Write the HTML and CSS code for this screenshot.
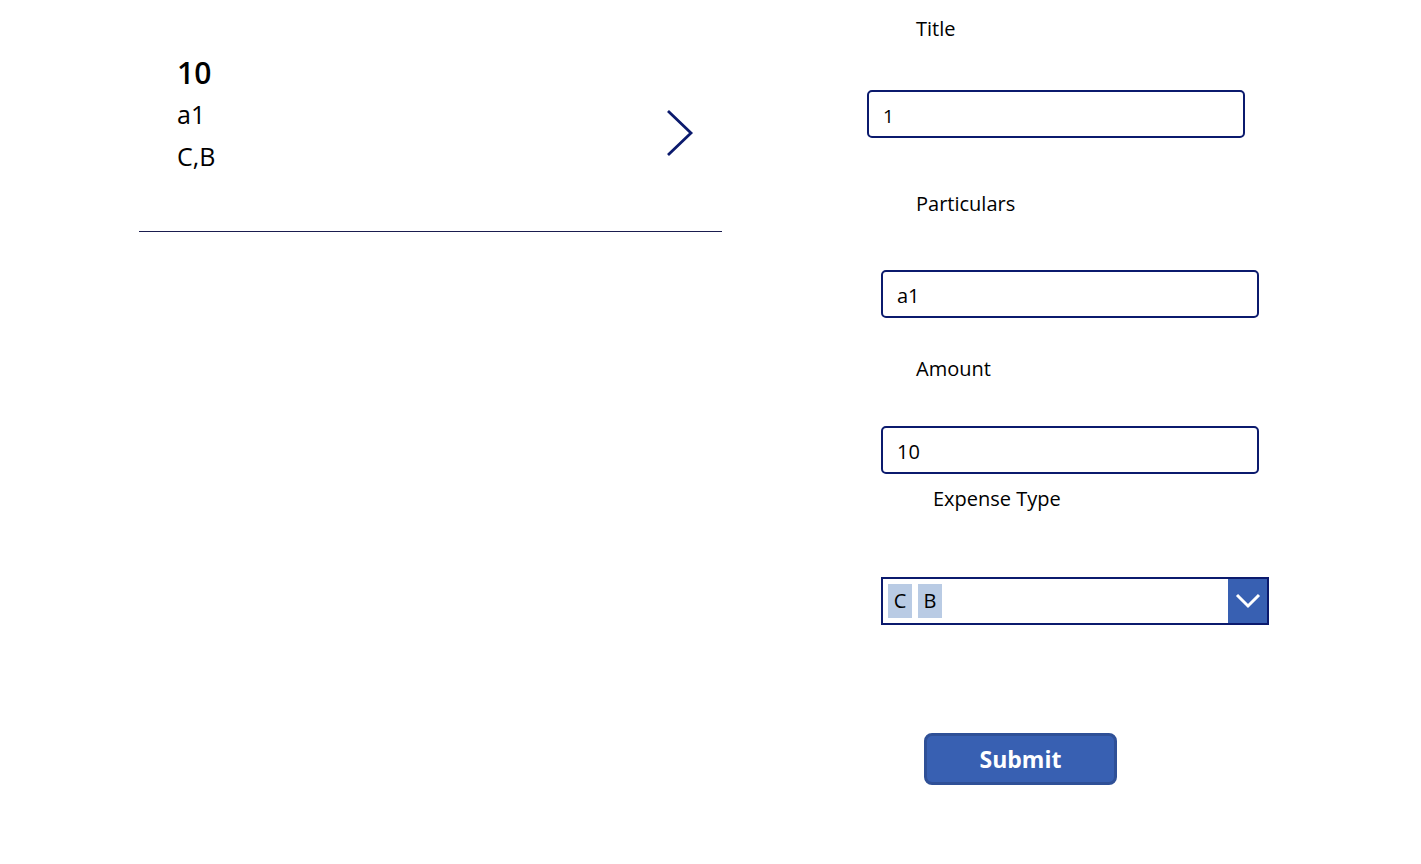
FILE: index.html
```html
<!DOCTYPE html>
<html lang="en">
<head>
<meta charset="utf-8">
<title>Expense</title>
<link rel="stylesheet" href="styles.css">
</head>
<body>
<div class="screen">
  <section class="gallery">
    <div class="item">
      <div class="item-text">
        <div class="item-title">10</div>
        <div class="item-sub">a1</div>
        <div class="item-sub">C,B</div>
      </div>
      <svg class="chevron" width="30" height="48" viewBox="0 0 30 48"><path d="M3 2 L26 24 L3 46" fill="none" stroke="#0b1a6d" stroke-width="2.8"/></svg>
    </div>
    <div class="sep"></div>
  </section>

  <section class="form">
    <div class="label label-title">Title</div>
    <div class="input input-title">1</div>
    <div class="label label-part">Particulars</div>
    <div class="input input-part">a1</div>
    <div class="label label-amount">Amount</div>
    <div class="input input-amount">10</div>
    <div class="label label-type">Expense Type</div>
    <div class="combo">
      <div class="chips">
        <span class="chip">C</span>
        <span class="chip">B</span>
      </div>
      <div class="combo-btn">
        <svg width="26" height="16" viewBox="0 0 26 16"><path d="M2 2 L13 13 L24 2" fill="none" stroke="#ffffff" stroke-width="3"/></svg>
      </div>
    </div>
    <button class="submit">Submit</button>
  </section>
</div>
</body>
</html>
```

FILE: styles.css
```css
html, body {
  margin: 0;
  padding: 0;
  background: #ffffff;
}

body {
  font-family: "Open Sans", "Noto Sans", sans-serif;
  color: #000000;
}

.screen {
  display: flex;
  width: 1421px;
  height: 864px;
}

.gallery {
  margin-left: 139px;
  width: 583px;
}

.item {
  display: flex;
  align-items: flex-start;
  justify-content: space-between;
  height: 231px;
  padding-left: 38px;
  padding-right: 27px;
  box-sizing: border-box;
}

.item-text {
  padding-top: 53px;
}

.item-title {
  font-size: 30px;
  font-weight: 600;
  line-height: 40px;
  height: 40px;
}

.item-sub {
  font-size: 25px;
  line-height: 42px;
  height: 42px;
}

.chevron {
  margin-top: 109px;
}

.sep {
  height: 1px;
  background: #1a1d4f;
}

.form {
  margin-left: 145px;
  display: flex;
  flex-direction: column;
  align-items: flex-start;
}

.label {
  font-size: 20px;
  line-height: 40px;
  height: 40px;
  color: #000000;
}

.label-title { margin-top: 9px; margin-left: 49px; }
.label-part { margin-top: 46px; margin-left: 49px; }
.label-amount { margin-top: 31px; margin-left: 49px; }
.label-type { margin-top: 5px; margin-left: 66px; }

.input {
  width: 378px;
  height: 48px;
  box-sizing: border-box;
  border: 2px solid #0b1a6d;
  border-radius: 5px;
  padding-left: 14px;
  padding-top: 3px;
  font-size: 20px;
  line-height: 42px;
  color: #000000;
}

.input-title { margin-top: 41px; font-size: 19px; }
.input-part { margin-top: 46px; margin-left: 14px; }
.input-amount { margin-top: 37px; margin-left: 14px; }

.combo {
  margin-top: 58px;
  margin-left: 14px;
  width: 388px;
  height: 48px;
  box-sizing: border-box;
  border: 2px solid #0b1a6d;
  display: flex;
  align-items: stretch;
}

.chips {
  flex: 1;
  display: flex;
  align-items: center;
  gap: 6px;
  padding-left: 5px;
}

.chip {
  background: #b9cbe4;
  height: 34px;
  min-width: 24px;
  box-sizing: border-box;
  padding: 0 4px;
  font-size: 20px;
  line-height: 34px;
  text-align: center;
  color: #000000;
}

.combo-btn {
  width: 39px;
  background: #3860b2;
  display: flex;
  align-items: center;
  justify-content: center;
}

.submit {
  margin-top: 108px;
  margin-left: 57px;
  width: 193px;
  height: 52px;
  box-sizing: border-box;
  background: #3860b2;
  border: 3px solid #2f5097;
  border-radius: 8px;
  color: #ffffff;
  font-family: "Open Sans", "Noto Sans", sans-serif;
  font-size: 23px;
  font-weight: 700;
  padding: 0;
  line-height: 44px;
}
```
